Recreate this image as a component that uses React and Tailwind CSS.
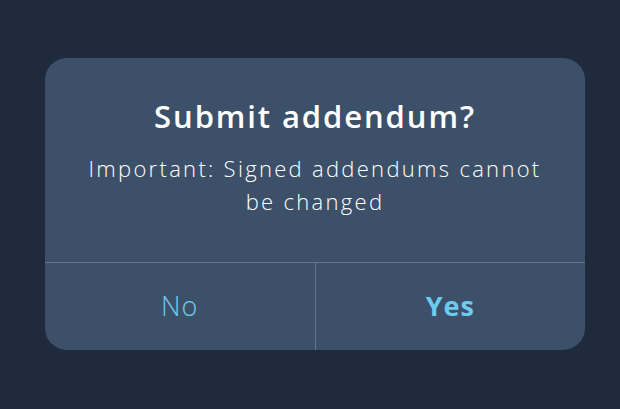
import React from "react";

const ConfirmDialog = () => {
  return (
    <div
      className="w-[620px] h-[409px] bg-[#1f2b3d] flex items-start pl-[45px] pt-[58px]"
      style={{ fontFamily: "'Open Sans', 'Noto Sans', sans-serif" }}
    >
      <div className="w-[540px] h-[292px] bg-[#3c5169] rounded-[22px] flex flex-col overflow-hidden">
        {/* Body */}
        <div className="flex-1 flex flex-col items-center pt-[38px] text-white text-center">
          <h1 className="text-[31px] font-semibold leading-[40px] tracking-[1.9px]">Submit addendum?</h1>
          <p className="mt-[16px] text-[22px] font-light leading-[33px] tracking-[2.3px]">
            Important: Signed addendums cannot
            <br />
            be changed
          </p>
        </div>

        {/* Actions */}
        <div className="h-[88px] flex border-t border-[#62768d]">
          <button className="flex-1 flex items-center justify-center text-[27px] text-[#6ccbef] font-light tracking-[1px] border-r border-[#62768d]">
            No
          </button>
          <button className="flex-1 flex items-center justify-center text-[27px] text-[#6ccbef] font-bold tracking-[1px]">
            Yes
          </button>
        </div>
      </div>
    </div>
  );
};

export default function App() {
  return <ConfirmDialog />;
}
